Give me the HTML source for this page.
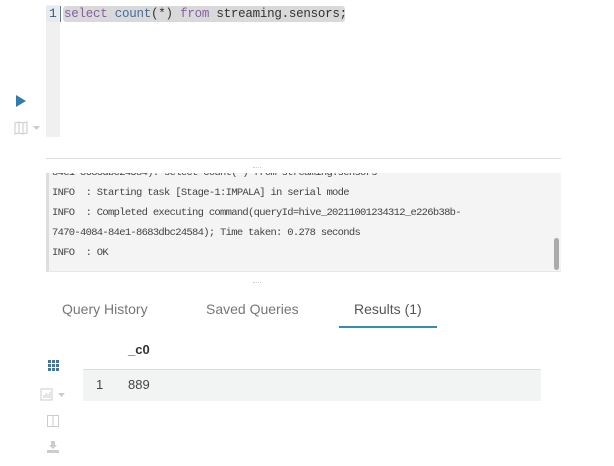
<!DOCTYPE html>
<html><head><style>
body{margin:0;width:614px;height:466px;background:#fff;position:relative;overflow:hidden;font-family:"Liberation Sans",sans-serif}
.a{position:absolute}
.mono{font-family:"Liberation Mono",monospace}
</style></head><body>
<div class="a" style="left:46px;top:5px;width:14px;height:132px;background:#f0f0f0"></div>
<div class="a" style="left:46px;top:6px;width:13px;height:16px;background:#e3ecf3"></div>
<div class="a mono" style="left:49px;top:6px;font-size:13px;line-height:16px;color:#555">1</div>
<div class="a" style="left:60px;top:6px;width:1px;height:16px;background:#4a7ba6"></div>
<div class="a" style="left:63px;top:6px;width:282px;height:16px;background:#d9d9d9;border-radius:3px"></div>
<div class="a mono" style="left:64px;top:6px;font-size:12.5px;line-height:16px;color:#333;letter-spacing:-0.25px;white-space:pre"><span style="color:#8a5ca8">select</span> <span style="color:#3a6fa8">count</span>(*) <span style="color:#8a5ca8">from</span> streaming.sensors;</div>
<svg class="a" style="left:15px;top:95px" width="12" height="12"><path d="M1 0L11 6L1 12Z" fill="#2f7cb0"/></svg>
<svg class="a" style="left:14px;top:121px" width="30" height="14"><path d="M1 2L5 1L9 2L13 1V12L9 13L5 12L1 13Z M5 1V12 M9 2V13" fill="none" stroke="#c8c8c8" stroke-width="1"/><path d="M19 5H26L22.5 9Z" fill="#ccc"/></svg>
<div class="a" style="left:46px;top:158px;width:515px;height:1px;background:#ddd"></div>
<div class="a" style="left:253px;top:167px;width:8px;height:1px;border-top:1px dotted #ccc"></div>
<div class="a" style="left:46px;top:173px;width:515px;height:99px;background:#f4f4f4;border-left:3px solid #ddd;box-sizing:border-box;overflow:hidden;border-bottom:1px solid #e6e6e6"></div>
<div class="a mono" style="left:52px;top:163px;width:500px;height:109px;overflow:hidden;clip-path:inset(10px 0 0 0);font-size:10.5px;line-height:20px;color:#444;white-space:pre;letter-spacing:-0.7px">84e1-8683dbc24584): select count(*) from streaming.sensors
INFO  : Starting task [Stage-1:IMPALA] in serial mode
INFO  : Completed executing command(queryId=hive_20211001234312_e226b38b-
7470-4084-84e1-8683dbc24584); Time taken: 0.278 seconds
INFO  : OK</div>
<div class="a" style="left:554px;top:238px;width:5px;height:32px;background:#aaa;border-radius:3px"></div>
<div class="a" style="left:253px;top:282px;width:8px;border-top:1px dotted #ccc"></div>
<div class="a" style="left:62px;top:301px;font-size:14px;color:#777">Query History</div>
<div class="a" style="left:206px;top:301px;font-size:14px;color:#777">Saved Queries</div>
<div class="a" style="left:354px;top:301px;font-size:14px;color:#555">Results (1)</div>
<div class="a" style="left:339px;top:326px;width:98px;height:2px;background:#338bb8"></div>
<div class="a" style="left:128px;top:342px;font-size:13px;font-weight:bold;color:#333">_c0</div>
<div class="a" style="left:83px;top:369px;width:458px;height:31px;background:#f2f4f4;border-top:1px solid #ddd"></div>
<div class="a" style="left:96px;top:377px;font-size:13px;color:#444">1</div>
<div class="a" style="left:128px;top:377px;font-size:13px;color:#444">889</div>
<svg class="a" style="left:48px;top:360px" width="13" height="11"><g fill="#2f7cb0"><rect x="0" y="0" width="3" height="3"/><rect x="4" y="0" width="3" height="3"/><rect x="8" y="0" width="3" height="3"/><rect x="0" y="4" width="3" height="3"/><rect x="4" y="4" width="3" height="3"/><rect x="8" y="4" width="3" height="3"/><rect x="0" y="8" width="3" height="3"/><rect x="4" y="8" width="3" height="3"/><rect x="8" y="8" width="3" height="3"/></g></svg>
<svg class="a" style="left:40px;top:388px" width="36" height="14"><rect x="1" y="1" width="11" height="11" fill="none" stroke="#ccc"/><path d="M4 10V7M6 10V5M8 10V6M10 10V4" stroke="#ccc"/><path d="M18 5H25L21.5 9Z" fill="#ccc"/></svg>
<svg class="a" style="left:47px;top:415px" width="13" height="13"><rect x="0.5" y="0.5" width="11" height="11" fill="none" stroke="#ccc"/><path d="M6 1V12" stroke="#ccc"/></svg>
<svg class="a" style="left:47px;top:441px" width="13" height="13"><path d="M4 0H8V4H10L6 8L2 4H4Z M0 9H12V12H0Z" fill="#ccc"/></svg>
</body></html>
